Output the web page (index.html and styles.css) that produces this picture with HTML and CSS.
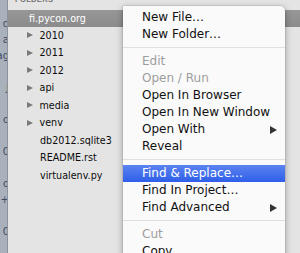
FILE: index.html
```html
<!DOCTYPE html>
<html>
<head>
<meta charset="utf-8">
<link rel="stylesheet" href="styles.css">
</head>
<body>
<div class="screen">
  <div class="dock">
    <div class="frag">
      <span>&nbsp;</span>
      <span>d</span>
      <span>a</span>
      <span>ag</span>
      <span>&nbsp;</span>
      <span>J</span>
      <span>&nbsp;</span>
      <span>o</span>
      <span>&nbsp;</span>
      <span>0</span>
      <span>&nbsp;</span>
      <span>o</span>
      <span>+</span>
      <span>&nbsp;</span>
      <span>0</span>
      <span>&nbsp;</span>
    </div>
  </div>
  <div class="sidebar">
    <div class="head"><span>FOLDERS</span></div>
    <ul class="tree">
      <li class="row sel"><span class="name">fi.pycon.org</span></li>
      <li class="row"><span class="tri"></span><span class="name">2010</span></li>
      <li class="row"><span class="tri"></span><span class="name">2011</span></li>
      <li class="row"><span class="tri"></span><span class="name">2012</span></li>
      <li class="row"><span class="tri"></span><span class="name">api</span></li>
      <li class="row"><span class="tri"></span><span class="name">media</span></li>
      <li class="row"><span class="tri"></span><span class="name">venv</span></li>
      <li class="row"><span class="notri"></span><span class="name">db2012.sqlite3</span></li>
      <li class="row"><span class="notri"></span><span class="name">README.rst</span></li>
      <li class="row"><span class="notri"></span><span class="name">virtualenv.py</span></li>
    </ul>
  </div>
  <div class="menu">
    <div class="item">New File…</div>
    <div class="item">New Folder…</div>
    <div class="sep"></div>
    <div class="item off">Edit</div>
    <div class="item off">Open / Run</div>
    <div class="item">Open In Browser</div>
    <div class="item">Open In New Window</div>
    <div class="item">Open With <span class="arrow"></span></div>
    <div class="item">Reveal</div>
    <div class="sep"></div>
    <div class="item hot">Find &amp; Replace…</div>
    <div class="item">Find In Project…</div>
    <div class="item">Find Advanced <span class="arrow"></span></div>
    <div class="sep"></div>
    <div class="item off">Cut</div>
    <div class="item">Copy</div>
  </div>
</div>
</body>
</html>
```
FILE: styles.css
```css
html, body {
  margin: 0;
  padding: 0;
}
body {
  width: 300px;
  height: 253px;
  overflow: hidden;
  background: #e4e4e4;
  font-family: "DejaVu Sans", sans-serif;
}
.screen {
  position: relative;
  display: flex;
  width: 300px;
  height: 253px;
  overflow: hidden;
}
.dock {
  width: 7px;
  flex: none;
  background: #a9b1bd;
  border-right: 1px solid #8c939d;
  overflow: hidden;
}
.frag {
  display: flex;
  flex-direction: column;
  align-items: flex-end;
  width: 7px;
  font-size: 10px;
  line-height: 16px;
  color: #3d4a63;
  white-space: nowrap;
}
.frag span {
  display: block;
  margin-right: -2px;
}
.sidebar {
  flex: 1;
  background: #e4e4e4;
}
.head {
  height: 10px;
  overflow: hidden;
  padding-left: 7px;
}
.head span {
  display: block;
  margin-top: -5px;
  line-height: 10px;
  font-family: "Liberation Sans", sans-serif;
  font-weight: bold;
  font-size: 7.6px;
  color: #747474;
  letter-spacing: 0.3px;
}
.tree {
  list-style: none;
  margin: 0;
  padding: 0;
}
.row {
  display: flex;
  align-items: center;
  height: 17.5px;
  padding-left: 19px;
  font-size: 9.6px;
  color: #0c0c0c;
  box-sizing: border-box;
  padding-bottom: 1px;
}
.row.sel {
  background: linear-gradient(#979797, #8b8b8b);
  color: #ffffff;
  padding-left: 21px;
  height: 17px;
}
.tri {
  width: 0;
  height: 0;
  border-left: 6.5px solid #7a7a7a;
  border-top: 3.5px solid transparent;
  border-bottom: 3.5px solid transparent;
  margin-right: 6.5px;
}
.notri {
  width: 6.5px;
  margin-right: 6.5px;
}
.menu {
  position: absolute;
  left: 123px;
  top: 6px;
  width: 162px;
  padding-top: 3px;
  background: #fafafa;
  border-radius: 0 5px 0 0;
  box-shadow: 0 2px 7px rgba(0, 0, 0, 0.35), 0 0 0 1px rgba(0, 0, 0, 0.06);
}
.item {
  display: flex;
  justify-content: space-between;
  align-items: center;
  height: 17px;
  line-height: 17px;
  padding: 0 8px 0 19px;
  font-size: 12px;
  color: #111111;
  white-space: nowrap;
}
.item.off {
  color: #9d9d9d;
}
.item.hot {
  background: linear-gradient(#5b83f0, #2f5fe9);
  color: #ffffff;
}
.arrow {
  width: 0;
  height: 0;
  border-left: 7px solid #333333;
  border-top: 4px solid transparent;
  border-bottom: 4px solid transparent;
}
.sep {
  height: 1px;
  margin: 4px 0 5px;
  background: #e0e0e0;
}
```
